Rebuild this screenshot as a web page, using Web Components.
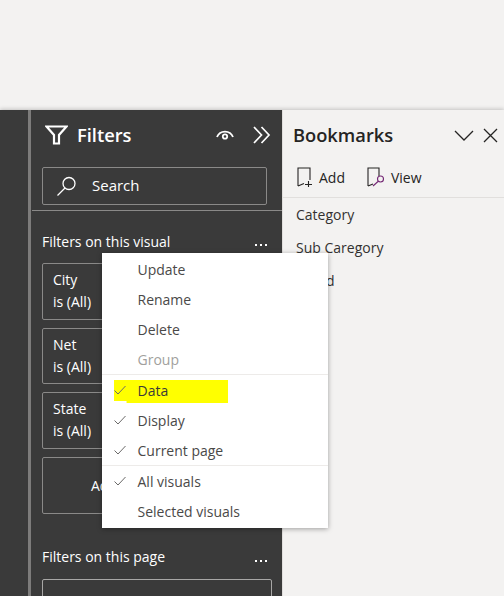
<!DOCTYPE html>
<html>
<head>
<meta charset="utf-8">
<style>
html, body { margin: 0; padding: 0; height: 100%; overflow: hidden; }
body { background: #f3f2f1; font-family: "Open Sans", "Noto Sans", sans-serif; }
</style>
</head>
<body>
<pbi-app>
  <pbi-filters slot="filters">
    <pbi-card name="City"></pbi-card>
    <pbi-card name="Net"></pbi-card>
    <pbi-card name="State"></pbi-card>
  </pbi-filters>
  <pbi-bookmarks slot="bookmarks">
    <pbi-bookmark>Category</pbi-bookmark>
    <pbi-bookmark>Sub Caregory</pbi-bookmark>
    <pbi-bookmark>Trend</pbi-bookmark>
  </pbi-bookmarks>
  <pbi-menu slot="menu">
    <pbi-item>Update</pbi-item>
    <pbi-item>Rename</pbi-item>
    <pbi-item>Delete</pbi-item>
    <pbi-item disabled>Group</pbi-item>
    <pbi-sep></pbi-sep>
    <pbi-item checked marked>Data</pbi-item>
    <pbi-item checked>Display</pbi-item>
    <pbi-item checked>Current page</pbi-item>
    <pbi-sep></pbi-sep>
    <pbi-item checked>All visuals</pbi-item>
    <pbi-item>Selected visuals</pbi-item>
  </pbi-menu>
</pbi-app>

<script>
const FONT = '"Open Sans", "Noto Sans", sans-serif';
const DARK = '#3a3a3a';

// page frame, the menu floats over the two panes
class PbiApp extends HTMLElement {
  constructor() {
    super();
    this.attachShadow({ mode: 'open' });
    this.shadowRoot.innerHTML = `
    <style>
      :host { display: block; width: 504px; height: 596px; position: relative; overflow: hidden; font-family: ${FONT}; }
      .top { height: 110px; background: #f3f2f1; }
      .main { display: flex; height: 486px; box-shadow: 0 -1px 4px rgba(0,0,0,.2); }
      .rail { width: 28px; background: ${DARK}; flex: none; }
      .line { width: 3px; background: #7d7c7b; flex: none; }
      .gap { width: 1px; background: ${DARK}; flex: none; }
      ::slotted([slot=filters]) { flex: none; }
      ::slotted([slot=bookmarks]) { flex: 1; }
      ::slotted([slot=menu]) { position: absolute; left: 102px; top: 253px; }
    </style>
    <div class="top"></div>
    <div class="main">
      <div class="rail"></div><div class="line"></div><div class="gap"></div>
      <slot name="filters"></slot>
      <slot name="bookmarks"></slot>
    </div>
    <slot name="menu"></slot>`;
  }
}

class PbiFilters extends HTMLElement {
  constructor() {
    super();
    this.attachShadow({ mode: 'open' });
    this.shadowRoot.innerHTML = `
    <style>
      :host { display: block; width: 250px; height: 486px; background: ${DARK}; color: #fff; font-size: 14px; overflow: hidden; box-sizing: border-box; }
      .head { display: flex; align-items: center; height: 50px; padding: 0 0 0 13px; }
      .head h2 { margin: 0 0 0 9px; font-size: 18.300px; font-weight: 600; line-height: 50px; flex: 1; }
      .head svg { display: block; flex: none; }
      .search { display: flex; align-items: center; margin: 7px 15px 0 10px; border: 1px solid #8a8988; border-radius: 2px; box-sizing: border-box; height: 38px; padding-left: 13px; font-size: 15px; }
      .search span { margin-left: 15px; position: relative; top: -1px; }
      .rule { height: 1px; background: #8a8988; margin-top: 5px; }
      .sec { display: flex; justify-content: space-between; align-items: center; height: 20px; margin: 20px 15px 0 10px; }
      .dots { display: flex; gap: 3px; padding: 8px 0 0; }
      .dots i { width: 2px; height: 2px; background: #fff; }
      .list { display: flex; flex-direction: column; gap: 8px; margin: 12px 10px 0; }
      .add { height: 57px; border: 1px solid #8a8988; border-radius: 2px; box-sizing: border-box; margin: 8px 10px 0; display: flex; align-items: center; padding-left: 48px; }
      .box { height: 40px; border: 1px solid #a8a7a6; border-radius: 2px; margin: 12px 10px 0; }
    </style>
    <div class="head">
      <svg width="23" height="20" viewBox="0 0 23 20" fill="none" stroke="#fff" stroke-width="2.200"><path d="M1.500 1.500h20l-7.500 8.500v8.500h-5v-8.500z"/></svg>
      <h2>Filters</h2>
      <svg width="18" height="12" viewBox="0 0 18 12" fill="none" stroke="#fff" stroke-width="1.800" style="margin-right:19px"><path d="M1 8a8.600 8.600 0 0 1 16 0"/><circle cx="9" cy="7.500" r="2.200"/></svg>
      <svg width="18" height="18" viewBox="0 0 18 18" fill="none" stroke="#fff" stroke-width="1.700" style="margin-right:11px"><path d="M1 1l7.500 8-7.500 8M8.500 1l7.500 8-7.500 8"/></svg>
    </div>
    <div class="search">
      <svg width="21" height="20" viewBox="0 0 21 20" fill="none" stroke="#fff" stroke-width="1.300"><circle cx="13" cy="7.500" r="6"/><path d="M9 12L1.500 19.500"/></svg>
      <span>Search</span>
    </div>
    <div class="rule"></div>
    <div class="sec"><span>Filters on this visual</span><div class="dots"><i></i><i></i><i></i></div></div>
    <div class="list"><slot></slot></div>
    <div class="add">Add data fields here</div>
    <div class="sec" style="margin-top:33px"><span>Filters on this page</span><div class="dots"><i></i><i></i><i></i></div></div>
    <div class="box"></div>`;
  }
}

class PbiCard extends HTMLElement {
  constructor() {
    super();
    this.attachShadow({ mode: 'open' });
    this.shadowRoot.innerHTML = `
    <style>
      :host { display: block; height: 56.500px; box-sizing: border-box; border: 1px solid #8a8988; border-radius: 2px; padding: 5px 10px; font-size: 14px; line-height: 22px; color: #fff; }
    </style>
    <div>${this.getAttribute('name')}</div>
    <div>is (All)</div>`;
  }
}

class PbiBookmarks extends HTMLElement {
  constructor() {
    super();
    this.attachShadow({ mode: 'open' });
    this.shadowRoot.innerHTML = `
    <style>
      :host { display: block; background: #f3f2f1; color: #252423; box-shadow: inset 1px 0 0 #e1dfdd; }
      .head { display: flex; align-items: center; height: 50px; padding-left: 11px; }
      h2 { margin: 0; flex: 1; font-size: 18.300px; font-weight: 600; line-height: 50px; }
      .head svg { flex: none; display: block; }
      .tools { display: flex; align-items: center; box-sizing: border-box; height: 37px; padding: 0 0 4px 15px; font-size: 14px; gap: 6px; margin-top: 1px; border-bottom: 1px solid #e1dfdd; }
      .tools svg { display: block; }
      .tools span { margin-right: 16px; }
    </style>
    <div class="head">
      <h2>Bookmarks</h2>
      <svg width="20" height="11" viewBox="0 0 20 11" fill="none" stroke="#252423" stroke-width="1.300" style="margin-right:9px"><path d="M1 1l9 9 9-9"/></svg>
      <svg width="15" height="15" viewBox="0 0 15 15" fill="none" stroke="#252423" stroke-width="1.300" style="margin-right:6px"><path d="M1 1l13 13M14 1L1 14"/></svg>
    </div>
    <div class="tools">
      <svg width="16" height="20" viewBox="0 0 16 20" fill="none" stroke="#252423" stroke-width="1.100"><path d="M1 19V1h12v12M1 19l6-2.500M8 17.500h7M11.500 14v7"/></svg>
      <span>Add</span>
      <svg width="18" height="20" viewBox="0 0 18 20" fill="none" stroke="#252423" stroke-width="1.100"><path d="M1 19V1h11v8M1 19l5-2"/><circle cx="13.500" cy="12" r="3" stroke="#742774"/><path d="M11 14.500l-5 4.500" stroke="#742774"/></svg>
      <span>View</span>
    </div>
    <slot></slot>`;
  }
}

class PbiBookmark extends HTMLElement {
  constructor() {
    super();
    this.attachShadow({ mode: 'open' });
    this.shadowRoot.innerHTML = `
    <style>:host { display: block; height: 33px; line-height: 33px; padding-left: 14px; font-size: 14px; color: #323130; }</style>
    <slot></slot>`;
  }
}

class PbiMenu extends HTMLElement {
  constructor() {
    super();
    this.attachShadow({ mode: 'open' });
    this.shadowRoot.innerHTML = `
    <style>
      :host { display: block; width: 226px; box-sizing: border-box; height: 275px; padding: 1px 0; background: #fff; box-shadow: 0 1px 5px rgba(0,0,0,.35); }
    </style>
    <slot></slot>`;
  }
}

class PbiSep extends HTMLElement {
  constructor() {
    super();
    this.attachShadow({ mode: 'open' });
    this.shadowRoot.innerHTML = `<style>:host { display: block; height: 1px; background: #edebe9; }</style>`;
  }
}

class PbiItem extends HTMLElement {
  constructor() {
    super();
    this.attachShadow({ mode: 'open' });
    const checked = this.hasAttribute('checked');
    const marked = this.hasAttribute('marked');
    const color = this.hasAttribute('disabled') ? '#a19f9d' : '#4a4948';
    this.shadowRoot.innerHTML = `
    <style>
      :host { display: block; height: 30px; position: relative; font-size: 14px; color: ${color}; }
      .row { display: flex; align-items: center; height: 30px; padding-left: 12px; position: relative; }
      /* hand drawn highlighter, left end stops a bit higher */
      .mark { position: absolute; left: 12px; top: 5px; width: 114px; height: 23px; background: #ffff00; clip-path: polygon(0 0, 100% 0, 100% 100%, 11% 100%, 11% 91%, 0 91%); }
      .tick { width: 12px; height: 10px; flex: none; position: relative; }
      .txt { margin-left: 11.500px; position: relative; white-space: nowrap; color: ${marked ? '#3b3a39' : color}; }
    </style>
    ${marked ? '<div class="mark"></div>' : ''}
    <div class="row">
      <svg class="tick" viewBox="0 0 12 10" fill="none" stroke="#6a6968" stroke-width="1">${checked ? '<path d="M.5 5.500l3.500 3.500 7.500-8"/>' : ''}</svg>
      <span class="txt"><slot></slot></span>
    </div>`;
  }
}

customElements.define('pbi-app', PbiApp);
customElements.define('pbi-filters', PbiFilters);
customElements.define('pbi-card', PbiCard);
customElements.define('pbi-bookmarks', PbiBookmarks);
customElements.define('pbi-bookmark', PbiBookmark);
customElements.define('pbi-menu', PbiMenu);
customElements.define('pbi-sep', PbiSep);
customElements.define('pbi-item', PbiItem);
</script>
</body>
</html>
